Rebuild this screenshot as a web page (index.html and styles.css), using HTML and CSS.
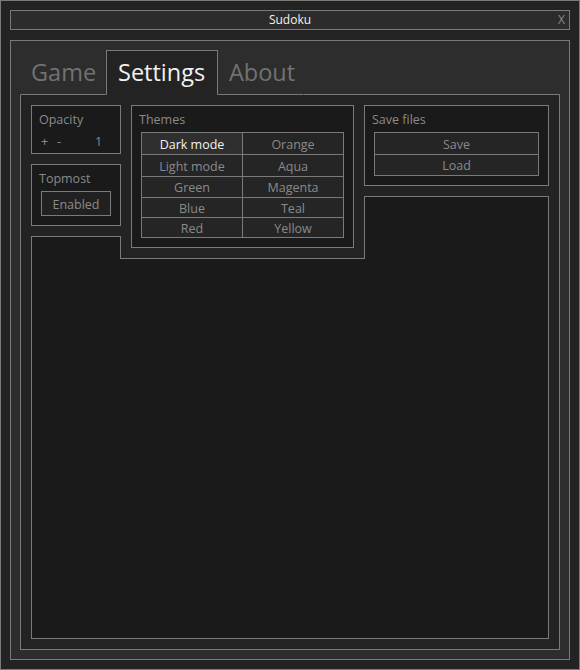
FILE: index.html
```html
<!DOCTYPE html>
<html>
<head>
<meta charset="utf-8">
<title>Sudoku</title>
<link rel="stylesheet" href="styles.css">
</head>
<body>
<div class="window">
  <div class="titlebar">
    <span></span>
    <span class="title">Sudoku</span>
    <span class="close">X</span>
  </div>
  <div class="main">
    <div class="tabs">
      <div class="tab tab-game">Game</div>
      <div class="tab tab-settings active">Settings</div>
      <div class="tab tab-about">About</div>
      <div class="tab-fill"></div>
    </div>
    <div class="tab-page">
      <div class="layout">
        <div class="col col-left">
          <div class="group group-opacity">
            <div class="group-label">Opacity</div>
            <div class="opacity-row">
              <span class="op-plus">+</span><span class="op-minus">-</span><span class="op-value">1</span>
            </div>
          </div>
          <div class="group group-topmost">
            <div class="group-label">Topmost</div>
            <div class="btn">Enabled</div>
          </div>
          <div class="notch"></div>
        </div>
        <div class="col col-mid">
          <div class="group group-themes">
            <div class="group-label">Themes</div>
            <div class="theme-table">
              <div class="cell selected">Dark mode</div>
              <div class="cell">Orange</div>
              <div class="cell">Light mode</div>
              <div class="cell">Aqua</div>
              <div class="cell">Green</div>
              <div class="cell">Magenta</div>
              <div class="cell">Blue</div>
              <div class="cell">Teal</div>
              <div class="cell">Red</div>
              <div class="cell">Yellow</div>
            </div>
          </div>
        </div>
        <div class="col col-right">
          <div class="group group-save">
            <div class="group-label">Save files</div>
            <div class="save-table">
              <div class="cell">Save</div>
              <div class="cell">Load</div>
            </div>
          </div>
          <div class="notch"></div>
        </div>
        <div class="canvas"></div>
      </div>
    </div>
  </div>
</div>
</body>
</html>
```

FILE: styles.css
```css
* {
  box-sizing: border-box;
}

html, body {
  margin: 0;
  padding: 0;
  background: #232323;
}

body {
  font-family: "Open Sans", "Noto Sans", sans-serif;
  font-size: 12.5px;
  color: #8a8a8a;
}

.window {
  width: 580px;
  height: 670px;
  border: 1px solid #7a7a7a;
  background: #232323;
  padding: 9px;
  display: flex;
  flex-direction: column;
}

.titlebar {
  height: 20px;
  border: 1px solid #7a7a7a;
  background: #2c2c2c;
  display: grid;
  grid-template-columns: 1fr auto 1fr;
  font-size: 12px;
  line-height: 18px;
  margin-bottom: 10px;
}

.title {
  color: #f2f2f2;
}

.close {
  justify-self: end;
  padding-right: 4px;
  color: #8a8a8a;
}

.main {
  flex: 1;
  border: 1px solid #7a7a7a;
  background: #2d2d2d;
  padding: 9px;
  display: flex;
  flex-direction: column;
}

.tabs {
  display: flex;
  align-items: flex-end;
  height: 45px;
}

.tab {
  height: 45px;
  padding: 5px 0 0 10px;
  font-size: 23.5px;
  line-height: 33px;
  color: #727272;
  border: 1px solid transparent;
  border-bottom-color: #7a7a7a;
  white-space: nowrap;
  overflow: hidden;
}

.tab-game {
  width: 86px;
}

.tab-settings {
  width: 112px;
}

.tab-about {
  width: 86px;
}

.tab.active {
  color: #f2f2f2;
  background: #232323;
  border-color: #7a7a7a;
  border-bottom: none;
  padding-left: 11px;
}

.tab-fill {
  flex: 1;
  height: 1px;
  background: #7a7a7a;
}

.tab-page {
  flex: 1;
  background: #232323;
  border: 1px solid #7a7a7a;
  border-top: none;
  padding: 10px;
  display: flex;
}

.layout {
  flex: 1;
  display: grid;
  grid-template-columns: 90px 243px 185px;
  grid-template-rows: auto 1fr;
}

.col {
  display: flex;
  flex-direction: column;
}

.col-mid {
  padding: 0 10px 10px;
  border-bottom: 1px solid #7a7a7a;
}

.group {
  border: 1px solid #7a7a7a;
  background: #1a1a1a;
  padding: 6px 9px 9px;
}

.group-label {
  line-height: 16px;
  margin: 0 0 4px -2px;
  color: #8a8a8a;
}

.group-opacity {
  height: 49px;
  padding-bottom: 4px;
  margin-bottom: 10px;
}

.group-opacity .group-label {
  margin-bottom: 5px;
}

.opacity-row {
  display: flex;
  line-height: 16px;
  padding-top: 1px;
}

.op-plus {
  width: 16px;
}

.op-minus {
  width: 38px;
}

.group-topmost {
  height: 62px;
  margin-bottom: 10px;
}

.btn {
  width: 70px;
  height: 25px;
  border: 1px solid #7a7a7a;
  background: #212121;
  text-align: center;
  padding-top: 2px;
  line-height: 21px;
  color: #8a8a8a;
}

.notch {
  flex: 1;
  background: #1a1a1a;
  border: 1px solid #7a7a7a;
  border-bottom: none;
}

.group-themes {
  height: 143px;
}

.theme-table {
  display: grid;
  grid-template-columns: 100px 100px;
  grid-template-rows: 21px 21px 20px 19px 19px;
  gap: 1px;
  padding: 1px;
  background: #7a7a7a;
  width: 203px;
}

.cell {
  background: #252525;
  text-align: center;
  color: #8a8a8a;
  display: flex;
  align-items: center;
  justify-content: center;
  line-height: 16px;
  padding-top: 2px;
}

.cell.selected {
  background: #2f2f2f;
  color: #f2f2f2;
}

.group-save {
  height: 81px;
  margin-bottom: 10px;
}

.save-table {
  display: grid;
  grid-template-columns: 1fr;
  grid-template-rows: 21px 20px;
  gap: 1px;
  padding: 1px;
  background: #7a7a7a;
}

.canvas {
  grid-column: 1 / -1;
  background: #1a1a1a;
  border: 1px solid #7a7a7a;
  border-top: none;
}
```
